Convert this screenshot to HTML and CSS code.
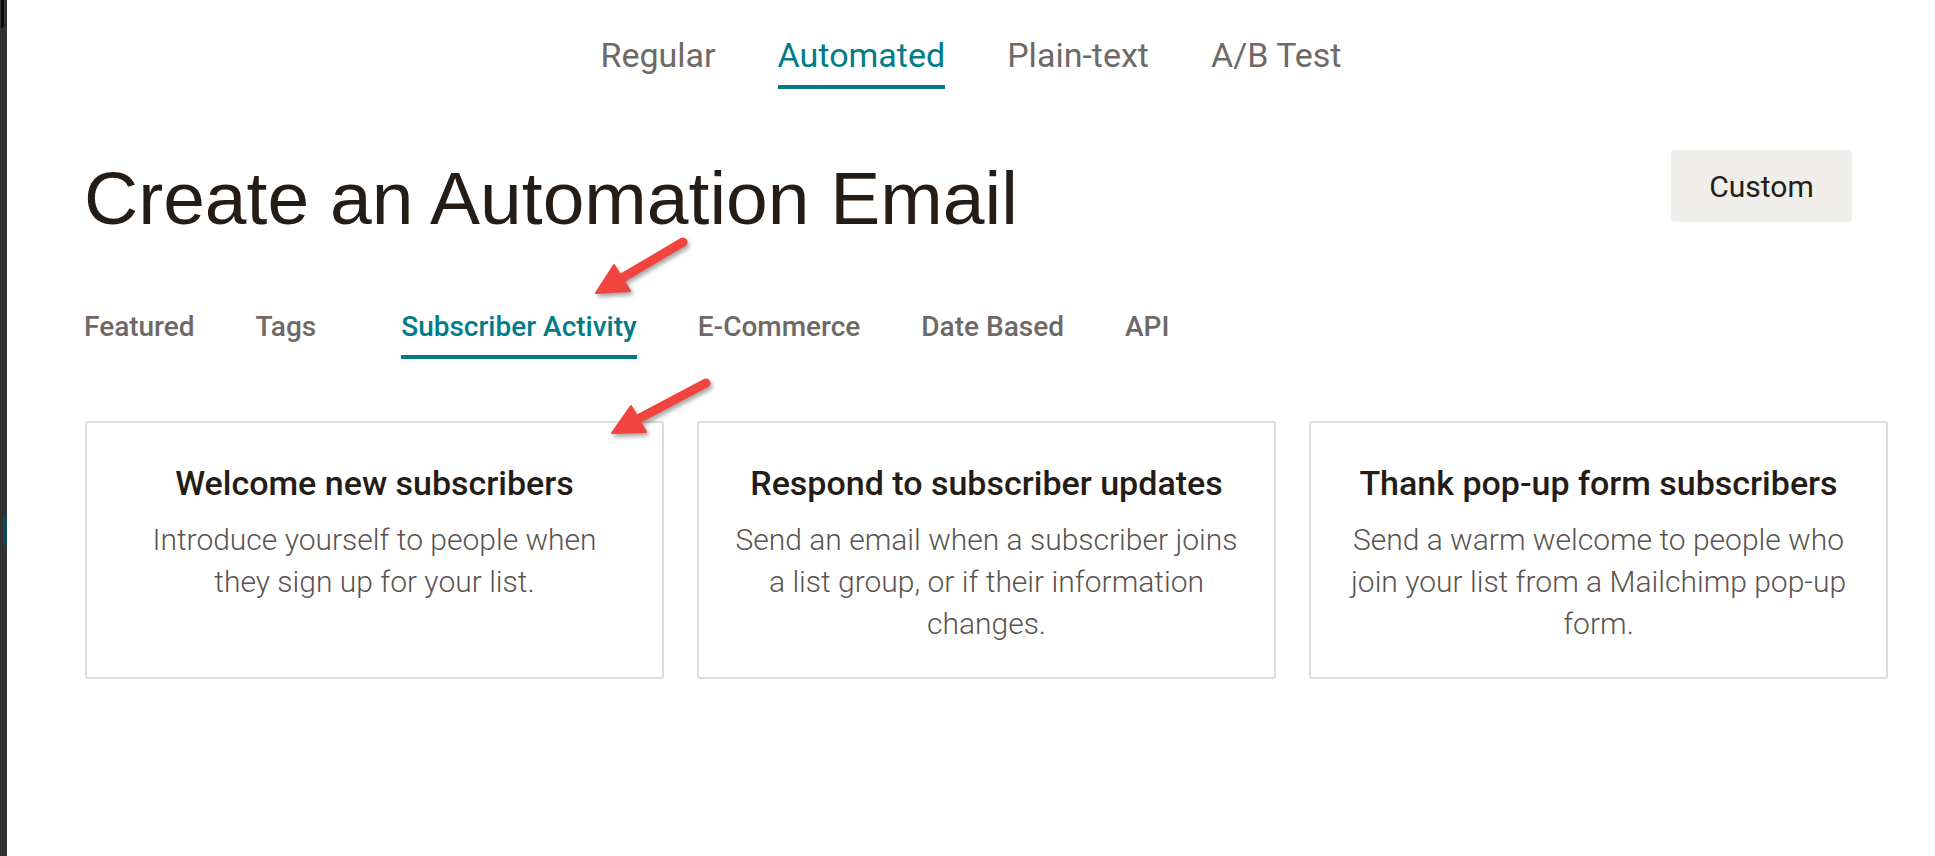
FILE: index.html
```html
<!DOCTYPE html>
<html lang="en">
<head>
  <meta charset="UTF-8" />
  <title>Create an Automation Email</title>
  <meta name="viewport" content="width=device-width, initial-scale=1.0" />
  <link rel="stylesheet" href="styles.css">
</head>
<body>

  <div class="app">
    <!-- dark window edge on the left -->
    <aside class="edge">
      <span class="edge-cap"></span>
      <span class="edge-tab"></span>
    </aside>

    <main class="page">
      <!-- Campaign type tabs -->
      <nav class="type-tabs">
        <a href="#" class="type-tab">Regular</a>
        <a href="#" class="type-tab active">Automated</a>
        <a href="#" class="type-tab">Plain-text</a>
        <a href="#" class="type-tab">A/B Test</a>
      </nav>

      <!-- Title row -->
      <header class="page-header">
        <h1>Create an Automation Email</h1>
        <button class="btn-custom">Custom</button>
      </header>

      <!-- Category tabs -->
      <nav class="cat-tabs">
        <a href="#" class="cat-tab">Featured</a>
        <a href="#" class="cat-tab tags">Tags</a>
        <a href="#" class="cat-tab active">Subscriber Activity</a>
        <a href="#" class="cat-tab">E-Commerce</a>
        <a href="#" class="cat-tab">Date Based</a>
        <a href="#" class="cat-tab">API</a>
      </nav>

      <!-- Templates -->
      <section class="cards">
        <div class="card">
          <h2>Welcome new subscribers</h2>
          <p>Introduce yourself to people when they sign up for your list.</p>
        </div>
        <div class="card">
          <h2>Respond to subscriber updates</h2>
          <p>Send an email when a subscriber joins a list group, or if their information changes.</p>
        </div>
        <div class="card">
          <h2>Thank pop-up form subscribers</h2>
          <p>Send a warm welcome to people who join your list from a Mailchimp pop-up form.</p>
        </div>
      </section>
    </main>
  </div>

  <!-- red annotation arrows -->
  <svg class="annotations" width="1935" height="856" viewBox="0 0 1935 856">
    <g fill="#f2443f" stroke="#f2443f">
      <line x1="683" y1="242" x2="622" y2="278" stroke-width="9" stroke-linecap="round" />
      <polygon points="596,293 630,291 614,265" stroke-width="2" stroke-linejoin="round" />
      <line x1="706" y1="383" x2="638" y2="419" stroke-width="9" stroke-linecap="round" />
      <polygon points="612,433 646,432 631,406" stroke-width="2" stroke-linejoin="round" />
    </g>
  </svg>

</body>
</html>
```

FILE: styles.css
```css
body, h1, h2, p {
  margin: 0;
  padding: 0;
}

body {
  font-family: Roboto, 'Liberation Sans', sans-serif;
  background: #fff;
  color: #241c15;
  overflow: hidden;
}

a {
  text-decoration: none;
}

.app {
  display: flex;
  min-height: 856px;
}

.edge {
  width: 7px;
  flex-shrink: 0;
  background: #323232;
  display: flex;
  flex-direction: column;
}

.edge-cap {
  width: 3px;
  height: 28px;
  margin-left: 1px;
  background: #0b0b0b;
  border-bottom-right-radius: 3px;
}

.edge-tab {
  width: 4px;
  height: 30px;
  margin: 487px 0 0 3px;
  background: #0d4a50;
}

.page {
  flex: 1;
  min-width: 0;
  padding: 0 83px 0 77px;
}

/* top tabs */
.type-tabs {
  display: flex;
  justify-content: center;
  gap: 62px;
  padding-top: 35px;
  padding-left: 6px;
}

.type-tab {
  font-size: 34px;
  line-height: 40px;
  color: #6e6966;
  padding-bottom: 10px;
  border-bottom: 4px solid transparent;
}

.type-tab.active {
  color: #007c89;
  border-bottom-color: #007c89;
}

/* title row */
.page-header {
  display: flex;
  justify-content: space-between;
  align-items: flex-start;
  margin-top: 65px;
}

h1 {
  font-family: 'Liberation Sans', Arial, sans-serif;
  font-weight: normal;
  font-size: 75px;
  line-height: 89px;
  color: #241c15;
}

.btn-custom {
  width: 181px;
  height: 72px;
  margin-top: -4px;
  border: none;
  border-radius: 4px;
  background: #efeeea;
  color: #241c15;
  font-family: Roboto, sans-serif;
  font-size: 30px;
  cursor: pointer;
}

/* category tabs */
.cat-tabs {
  display: flex;
  gap: 61px;
  margin-top: 67px;
}

.cat-tab {
  font-size: 28px;
  font-weight: 500;
  line-height: 34px;
  color: #6e6966;
  padding-bottom: 11px;
  border-bottom: 4px solid transparent;
}

.cat-tab.tags {
  margin-right: 24px;
}

.cat-tab.active {
  color: #007c89;
  border-bottom-color: #007c89;
}

/* cards */
.cards {
  display: grid;
  grid-template-columns: repeat(3, 579px);
  gap: 33px;
  margin-top: 62px;
  margin-left: 1px;
}

.card {
  box-sizing: border-box;
  min-height: 258px;
  padding: 40px 35px 30px;
  border: 2px solid #dedddc;
  border-radius: 3px;
  text-align: center;
}

.card h2 {
  font-size: 34px;
  font-weight: 500;
  line-height: 40px;
  color: #241c15;
  margin-bottom: 16px;
}

.card p {
  font-size: 30px;
  font-weight: 300;
  line-height: 42px;
  color: #5a5451;
}

.annotations {
  position: absolute;
  top: 0;
  left: 0;
  pointer-events: none;
  filter: drop-shadow(2px 3px 2px rgba(0, 0, 0, 0.35));
}
```
